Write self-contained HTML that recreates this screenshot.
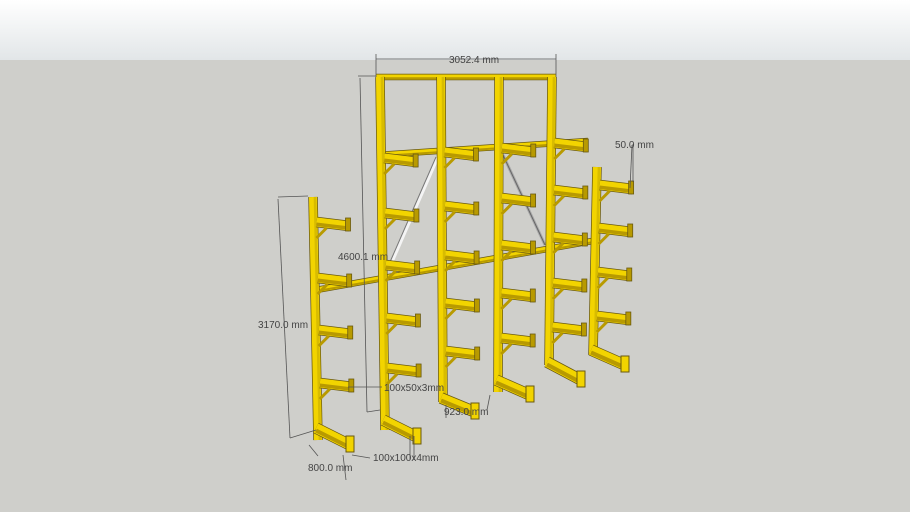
<!DOCTYPE html>
<html><head><meta charset="utf-8"><style>
html,body{margin:0;padding:0;width:910px;height:512px;overflow:hidden}
body{background:#cfcfcb;font-family:"Liberation Sans",sans-serif}
svg{position:absolute;left:0;top:0}
text{font-family:"Liberation Sans",sans-serif;font-size:10px;fill:#444}
</style></head><body>
<svg id="s" width="910" height="512" viewBox="0 0 910 512">
<defs><linearGradient id="sky" x1="0" y1="0" x2="0" y2="1"><stop offset="0" stop-color="#ffffff"/><stop offset="1" stop-color="#e2e6e8"/></linearGradient></defs>
<rect x="0" y="0" width="910" height="60" fill="url(#sky)"/>
<rect x="0" y="60" width="910" height="452" fill="#cfcfcb"/>
<g id="g"></g>
<g stroke="#555" stroke-width="0.8" fill="none">
<line x1="376" y1="59" x2="556" y2="59"/><line x1="376" y1="54" x2="376" y2="77"/><line x1="556" y1="54" x2="556" y2="77"/>
<line x1="358" y1="76" x2="376" y2="76"/><line x1="360" y1="78" x2="367" y2="412"/><line x1="367" y1="412" x2="380" y2="410"/>
<line x1="278" y1="197" x2="308" y2="196"/><line x1="278" y1="199" x2="290" y2="438"/><line x1="290" y1="438" x2="316" y2="430"/>
<line x1="348" y1="387" x2="382" y2="387"/>
<line x1="309" y1="445" x2="318" y2="456"/><line x1="343" y1="455" x2="346" y2="480"/><line x1="352" y1="455" x2="370" y2="458"/>
<line x1="410" y1="436" x2="410" y2="460"/><line x1="414" y1="436" x2="414" y2="460"/>
<line x1="446" y1="405" x2="446" y2="418"/><line x1="490" y1="395" x2="487" y2="410"/>
<line x1="632" y1="145" x2="630" y2="188"/><line x1="633" y1="144" x2="633" y2="182"/>
</g>
<g>
<text x="449" y="63">3052.4 mm</text>
<text x="338" y="260">4600.1 mm</text>
<text x="258" y="328">3170.0 mm</text>
<text x="384" y="391">100x50x3mm</text>
<text x="444" y="415">923.0 mm</text>
<text x="373" y="461">100x100x4mm</text>
<text x="308" y="471">800.0 mm</text>
<text x="615" y="148">50.0 mm</text>
</g>
</svg>
<script>
var g=document.getElementById('g'),h='';
var Y='#f2d400',D='#b89a00',E='#6a5a10';
function L(x1,y1,x2,y2,w,c){h+='<line x1="'+x1+'" y1="'+y1+'" x2="'+x2+'" y2="'+y2+'" stroke="'+(c||Y)+'" stroke-width="'+w+'" stroke-linecap="butt"/>';}
function bar(x1,y1,x2,y2,w){L(x1,y1,x2,y2,w+1.5,E);L(x1,y1,x2,y2,w,Y);L(x1,y1+w/4,x2,y2+w/4,w/2.5,D);}
function post(x1,y1,x2,y2,w){L(x1,y1,x2,y2,w+1.5,E);L(x1,y1,x2,y2,w,Y);L(x1+w/4,y1,x2+w/4,y2,w/3,'#d8bc00');}
L(438,157,392,262,3,'#f4f4f4');L(436,157,390,262,1,'#777');
L(503,155,545,245,3,'#aaa');L(503,155,545,245,1,'#666');
bar(376,77,556,77,5);
bar(378,155,588,141,5);
bar(316,290,598,240,5);
var posts=[[313,197,318,440,[222,278,330,383],[428,445]],
[380,77,385,430,[158,213,265,318,368],[420,437]],
[441,77,443,402,[152,206,255,303,351],[398,412]],
[499,77,498,392,[148,198,245,293,338],[380,395]],
[552,77,549,365,[143,190,237,283,327],[362,380]],
[597,167,593,355,[185,228,272,316],[350,365]]];
posts.forEach(function(p){
 post(p[0],p[1],p[2],p[3],8);
 p[4].forEach(function(y){
  var t=(y-p[1])/(p[3]-p[1]),x=p[0]+(p[2]-p[0])*t+3;
  bar(x,y,x+33,y+4,9);
  h+='<rect x="'+(x+29)+'" y="'+(y-4)+'" width="5" height="13" fill="'+D+'" stroke="'+E+'" stroke-width="0.8"/>';
  L(x,y+16,x+10,y+6,3,D);
 });
 var x=p[2]-2;bar(x,p[5][0],x+34,p[5][1],10);
 h+='<rect x="'+(x+30)+'" y="'+(p[5][1]-9)+'" width="8" height="16" fill="'+Y+'" stroke="'+E+'" stroke-width="1"/>';
});
g.innerHTML=h;
</script>
</body></html>
